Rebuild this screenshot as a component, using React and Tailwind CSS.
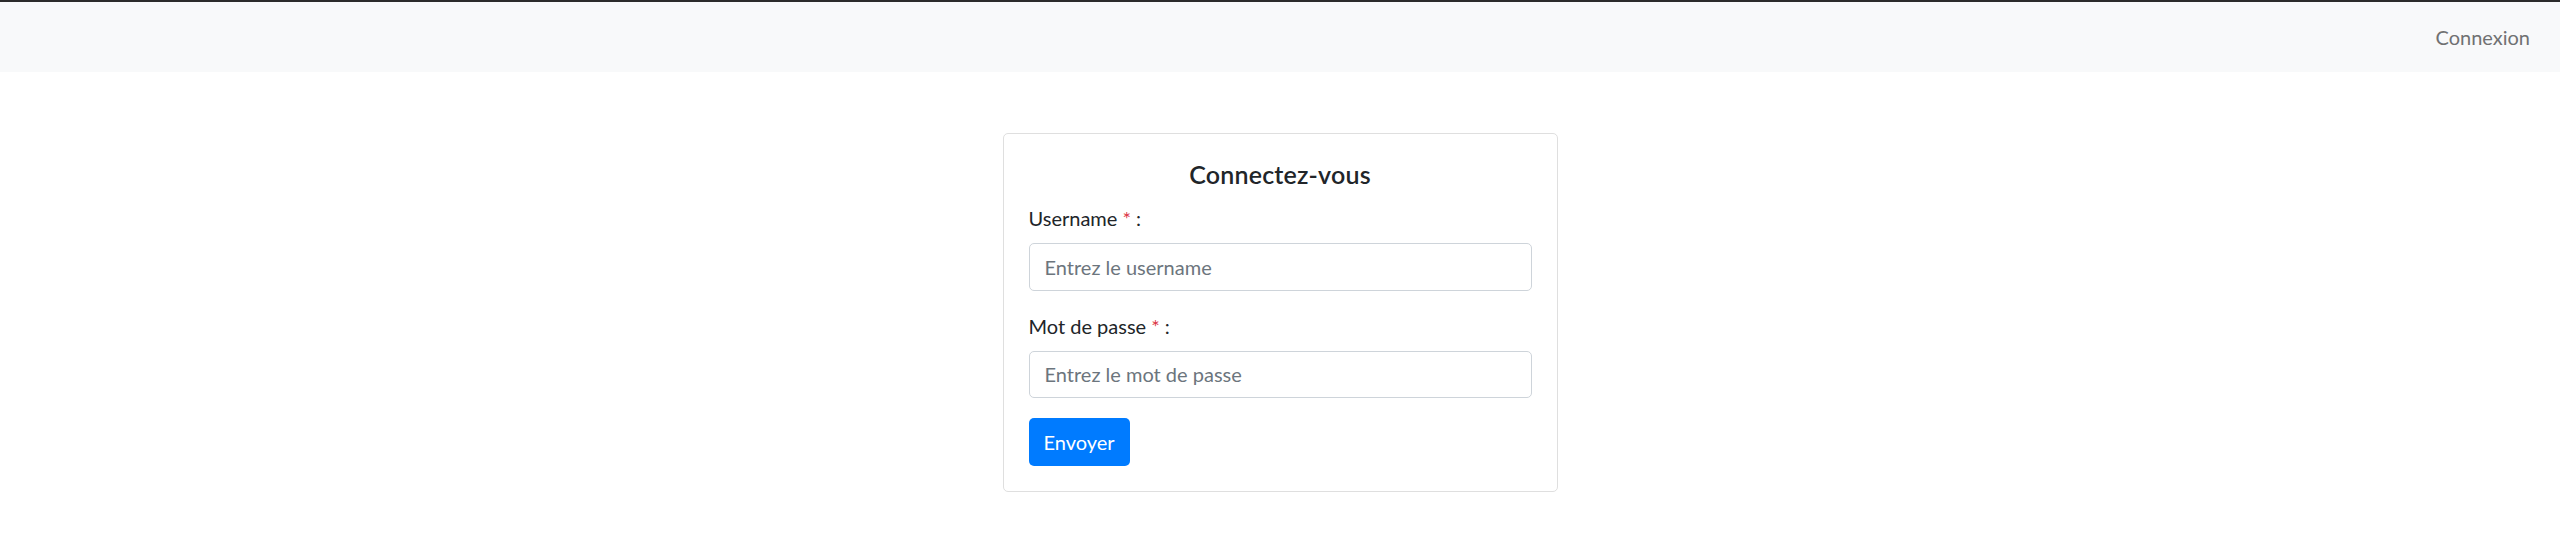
import React from 'react';

const Field = ({ label, placeholder, type = 'text' }) => (
  <div className="mb-[20px]">
    <label className="mb-[10px] block leading-[30px]">
      {label} <span className="text-[#dc3545]">*</span> :
    </label>
    <input
      type={type}
      placeholder={placeholder}
      className="block h-[47.5px] w-full rounded-[5px] border border-[#ced4da] bg-white px-[15px] text-[20px] text-[#495057] outline-none placeholder:text-[#6c757d]"
    />
  </div>
);

export default function App() {
  return (
    <div className="min-h-screen bg-white font-['Lato',sans-serif] text-[20px] leading-[1.5] text-[#212529]">
      {/* Navbar */}
      <nav className="flex h-[72px] items-center justify-end border-t-2 border-[#2b2b2b] bg-[#f8f9fa] px-[20px]">
        <a href="#" className="px-[10px] text-[#707172]">
          Connexion
        </a>
      </nav>

      {/* Login card */}
      <main className="flex justify-center pt-[61px]">
        <div className="w-[555px] rounded-[5px] border border-[#dfdfdf] p-[25px]">
          <h5 className="mb-[14px] text-center text-[25px] font-semibold leading-[30px] tracking-[0.2px]">Connectez-vous</h5>
          <form onSubmit={(e) => e.preventDefault()}>
            <Field label="Username" placeholder="Entrez le username" />
            <Field label="Mot de passe" placeholder="Entrez le mot de passe" type="password" />
            <button
              type="submit"
              className="h-[47.5px] rounded-[5px] bg-[#007bff] px-[15px] text-white"
            >
              Envoyer
            </button>
          </form>
        </div>
      </main>
    </div>
  );
}
